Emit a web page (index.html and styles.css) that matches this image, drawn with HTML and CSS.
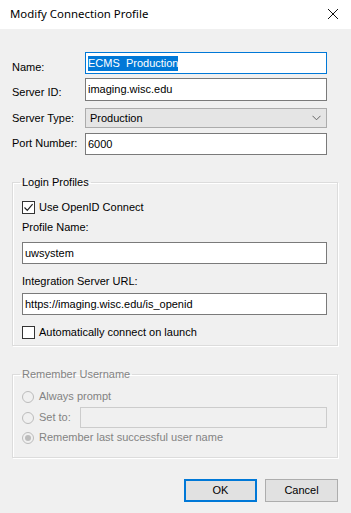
FILE: index.html
```html
<!DOCTYPE html>
<html>
<head>
<meta charset="utf-8">
<link rel="stylesheet" href="styles.css">
</head>
<body>
<div class="window">
  <div class="titlebar">
    <span class="title">Modify Connection Profile</span>
    <svg class="close" width="12" height="12" viewBox="0 0 12 12"><path d="M1 1L11 11M11 1L1 11" stroke="#111" stroke-width="1" fill="none"/></svg>
  </div>
  <div class="content">
    <div class="row row-name">
      <span class="label">Name:</span>
      <div class="textbox focused"><span class="sel">ECMS&nbsp; Production</span></div>
    </div>
    <div class="row row-id">
      <span class="label">Server ID:</span>
      <div class="textbox">imaging.wisc.edu</div>
    </div>
    <div class="row row-type">
      <span class="label">Server Type:</span>
      <div class="combo"><span>Production</span>
        <svg width="9" height="6" viewBox="0 0 9 6"><path d="M0.5 0.8L4.5 4.8L8.5 0.8" stroke="#666" stroke-width="1" fill="none"/></svg>
      </div>
    </div>
    <div class="row row-port">
      <span class="label">Port Number:</span>
      <div class="textbox">6000</div>
    </div>

    <fieldset class="group group-login">
      <legend>Login Profiles</legend>
      <div class="check-row first">
        <span class="checkbox"><svg width="11" height="11" viewBox="0 0 11 11"><path d="M1.5 5.5L4.3 8.4L9.6 2.2" stroke="#222" stroke-width="1.2" fill="none"/></svg></span>
        <span>Use OpenID Connect</span>
      </div>
      <div class="field-label profile-label">Profile Name:</div>
      <div class="textbox wide profile-box">uwsystem</div>
      <div class="field-label url-label">Integration Server URL:</div>
      <div class="textbox wide url-box">https://imaging.wisc.edu/is_openid</div>
      <div class="check-row auto">
        <span class="checkbox"></span>
        <span>Automatically connect on launch</span>
      </div>
    </fieldset>

    <fieldset class="group group-remember disabled">
      <legend>Remember Username</legend>
      <div class="radio-row r1"><span class="radio"></span><span>Always prompt</span></div>
      <div class="radio-row r2"><span class="radio"></span><span class="setto">Set to:</span><div class="textbox dis"></div></div>
      <div class="radio-row r3"><span class="radio checked"></span><span>Remember last successful user name</span></div>
    </fieldset>

    <div class="buttons">
      <div class="btn default">OK</div>
      <div class="btn">Cancel</div>
    </div>
  </div>
</div>
</body>
</html>
```
FILE: styles.css
```css
html, body {
  margin: 0;
  padding: 0;
}
body {
  width: 351px;
  height: 513px;
  overflow: hidden;
  background: #f0f0f0;
  font-family: "Liberation Sans", Arial, sans-serif;
  font-size: 11px;
  color: #000;
}
.window {
  width: 351px;
  height: 513px;
  background: #f0f0f0;
}
.titlebar {
  height: 29px;
  background: #fff;
  display: flex;
  align-items: center;
  justify-content: space-between;
  padding: 0 12px 0 10px;
  box-sizing: border-box;
}
.title {
  font-family: "Noto Sans", "Open Sans", sans-serif;
  font-size: 11.4px;
  color: #000;
  position: relative;
  top: -1px;
}
.close {
  display: block;
  margin-top: -1px;
}
.content {
  padding: 0 13px 0 12px;
}
.row {
  display: flex;
  align-items: flex-start;
  padding-right: 11px;
}
.label {
  width: 73px;
  flex: none;
  line-height: 13px;
}
.textbox {
  flex: 1;
  box-sizing: border-box;
  background: #fff;
  border: 1px solid #7a7a7a;
  padding: 0 3px 0 2px;
  line-height: 16px;
  white-space: pre;
}
.textbox.focused {
  border-color: #0078d7;
}
.sel {
  background: #0078d7;
  color: #fff;
  display: inline-block;
  line-height: 15px;
}
.row-name { margin-top: 23px; }
.row-name .label { margin-top: 9px; }
.row-name .textbox { height: 22px; padding-top: 2px; }
.row-id { margin-top: 4px; }
.row-id .label { margin-top: 8px; }
.row-id .textbox { height: 23px; padding-top: 2px; }
.row-type { margin-top: 7px; }
.row-type .label { margin-top: 4px; }
.row-port { margin-top: 5px; }
.row-port .label { margin-top: 4px; }
.row-port .textbox { height: 22px; padding-top: 2px; }
.combo {
  flex: 1;
  height: 20px;
  box-sizing: border-box;
  background: #e5e5e5;
  border: 1px solid #acacac;
  display: flex;
  align-items: center;
  justify-content: space-between;
  padding: 0 5px 0 4px;
}
.combo span { line-height: 16px; margin-top: -1px; }
.combo svg { display: block; }

.group {
  margin: 20px 0 0 0;
  padding: 0 10px 6px 9px;
  border: 1px solid #dcdcdc;
  box-shadow: inset 1px 1px 0 #fff, 1px 1px 0 #fff;
  min-width: 0;
}
.group legend {
  padding: 0 2px;
  margin-left: -2px;
  line-height: 14px;
}
.group-remember {
  margin-top: 21px;
  padding-bottom: 13px;
}
.check-row {
  display: flex;
  align-items: center;
  height: 13px;
  line-height: 13px;
}
.check-row.first { margin-top: 12px; }
.check-row.auto { margin-top: 11px; }
.checkbox {
  width: 13px;
  height: 13px;
  box-sizing: border-box;
  border: 1px solid #333;
  background: #fff;
  margin-right: 4px;
  display: flex;
  align-items: center;
  justify-content: center;
}
.checkbox svg { display: block; }
.field-label { line-height: 13px; }
.profile-label { margin-top: 7px; }
.profile-box { margin-top: 8px; height: 22px; padding-top: 2px; }
.url-label { margin-top: 11px; }
.url-box { margin-top: 5px; height: 22px; padding-top: 2px; }

.disabled, .disabled legend { color: #838383; }
.radio-row {
  display: flex;
  align-items: center;
  line-height: 13px;
}
.radio-row.r1 { margin-top: 9px; height: 13px; }
.radio-row.r2 { margin-top: 4px; height: 21px; }
.radio-row.r3 { margin-top: 3px; height: 13px; }
.radio {
  width: 12px;
  height: 12px;
  box-sizing: border-box;
  border: 1px solid #bcbcbc;
  border-radius: 50%;
  background: #f0f0f0;
  margin-right: 5px;
  position: relative;
  flex: none;
}
.radio.checked::after {
  content: "";
  position: absolute;
  left: 2px;
  top: 2px;
  width: 6px;
  height: 6px;
  border-radius: 50%;
  background: #bcbcbc;
}
.setto { width: 41px; flex: none; }
.textbox.dis {
  height: 21px;
  background: #f0f0f0;
  border-color: #cccccc;
}
.buttons {
  display: flex;
  justify-content: flex-end;
  gap: 8px;
  margin-top: 21px;
}
.btn {
  width: 73px;
  height: 23px;
  box-sizing: border-box;
  background: #e1e1e1;
  border: 1px solid #adadad;
  display: flex;
  align-items: center;
  justify-content: center;
  line-height: 13px;
}
.btn.default {
  border: 2px solid #0078d7;
}
```
